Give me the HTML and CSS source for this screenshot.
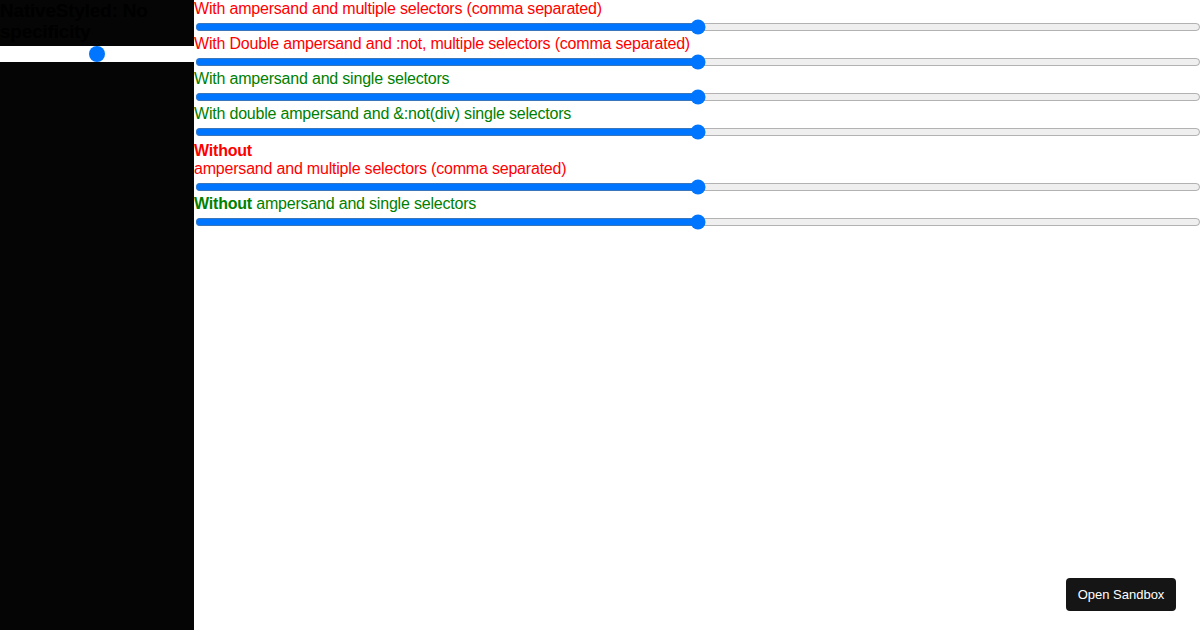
FILE: index.html
```html
<!DOCTYPE html>
<html lang="en">
<head>
  <meta charset="UTF-8">
  <title>Native styled sliders</title>
  <link rel="stylesheet" href="styles.css">
</head>
<body>
  <!-- Coluna preta: sem especificidade -->
  <div class="native-col">
    <h3>NativeStyled: No specificity</h3>
    <input type="range" class="native-range" min="0" max="100" value="50">
  </div>

  <!-- Casos com e sem ampersand -->
  <div class="cases">
    <div class="case bad">
      <label>With ampersand and multiple selectors (comma separated)</label>
      <input type="range" min="0" max="100" value="50">
    </div>
    <div class="case bad">
      <label>With Double ampersand and :not, multiple selectors (comma separated)</label>
      <input type="range" min="0" max="100" value="50">
    </div>
    <div class="case good">
      <label>With ampersand and single selectors</label>
      <input type="range" min="0" max="100" value="50">
    </div>
    <div class="case good">
      <label>With double ampersand and &amp;:not(div) single selectors</label>
      <input type="range" min="0" max="100" value="50">
    </div>
    <div class="case bad">
      <label><b class="block">Without</b> ampersand and multiple selectors (comma separated)</label>
      <input type="range" min="0" max="100" value="50">
    </div>
    <div class="case good">
      <label><b>Without</b> ampersand and single selectors</label>
      <input type="range" min="0" max="100" value="50">
    </div>
  </div>

  <button class="sandbox-btn">Open Sandbox</button>
</body>
</html>
```

FILE: styles.css
```css
* {
  box-sizing: border-box;
}

body {
  margin: 0;
  display: flex;
  min-height: 100vh;
  font-family: 'Liberation Sans', Arial, sans-serif;
  font-size: 16px;
}

.native-col {
  width: 194px;
  flex-shrink: 0;
  background-color: #050505;
}

.native-col h3 {
  margin: 0;
  font-size: 19px;
  line-height: 21px;
  letter-spacing: -0.2px;
  color: #000;
}

.native-range {
  -webkit-appearance: none;
  appearance: none;
  display: block;
  width: 100%;
  height: 16px;
  margin: 4px 0 0;
  background: #fff;
}

.native-range::-webkit-slider-thumb {
  -webkit-appearance: none;
  width: 16px;
  height: 16px;
  border-radius: 50%;
  background: #0075ff;
}

.cases {
  flex: 1;
  display: flex;
  flex-direction: column;
}

.case label {
  display: block;
  line-height: 18px;
  letter-spacing: -0.2px;
}

.case input[type="range"] {
  display: block;
  width: 100%;
  margin: 1px 0 0 1px;
  height: 16px;
}

.bad {
  color: #ff0000;
}

.good {
  color: #008000;
}

.block {
  display: block;
  line-height: 19px;
  padding-top: 1px;
}

.sandbox-btn {
  position: fixed;
  right: 24px;
  bottom: 19px;
  width: 110px;
  height: 33px;
  padding: 0;
  background-color: #151515;
  color: #fff;
  border: none;
  border-radius: 4px;
  font-family: 'Liberation Sans', Arial, sans-serif;
  font-size: 13px;
}
```
